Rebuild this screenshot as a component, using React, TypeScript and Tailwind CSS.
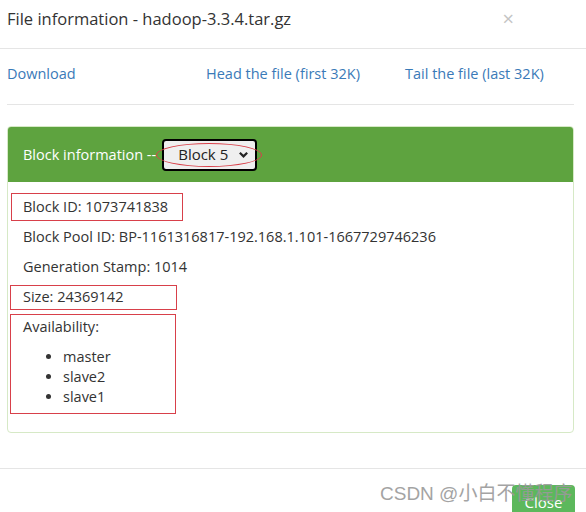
import React from "react";

const font = { fontFamily: '"Open Sans", "Noto Sans CJK SC", sans-serif' };

const App = () => {
  return (
    <div className="w-[586px] h-[512px] bg-white overflow-hidden relative text-[#333]" style={font}>
      {/* header */}
      <div className="h-[48px] flex items-center justify-between pl-[7px] pr-[72px] pb-[10px]">
        <h4 className="text-[16.5px] leading-none text-[#333]">File information - hadoop-3.3.4.tar.gz</h4>
        <span className="text-[20px] text-[#c4c4c4] leading-none">×</span>
      </div>
      <div className="border-t border-[#e5e5e5]" />

      <div className="px-[7px] pr-[12px]">
        <div className="h-[55px] flex items-center text-[14.5px] text-[#3a7ab8] pb-[6px]">
          <a className="w-[199px]">Download</a>
          <a className="w-[199px]">Head the file (first 32K)</a>
          <a>Tail the file (last 32K)</a>
        </div>
        <div className="border-t border-[#e5e5e5]" />

        {/* panel */}
        <div className="mt-[21px] h-[307px] border border-[#d6e9c6] rounded-[4px] overflow-hidden">
          <div className="h-[55px] bg-[#5ea33f] flex items-center pl-[15px] text-white text-[14.5px]">
            <span>Block information --</span>
            <div className="relative ml-[6px]">
              <div className="w-[95px] h-[32px] bg-[#efefef] border-2 border-black rounded-[4px] flex items-center justify-between pl-[14px] pr-[6px] text-[#222] text-[15px]">
                <span>Block 5</span>
                <svg width="11" height="11" viewBox="0 0 12 12">
                  <path d="M2 4 L6 8 L10 4" stroke="#222" strokeWidth="2.4" fill="none" />
                </svg>
              </div>
              <div className="absolute left-[-6px] top-[4px] w-[106px] h-[24px] rounded-[50%] border border-[#d8404a]" />
            </div>
          </div>
          <div className="pl-[15px] pt-[12px] text-[14.5px] text-[#333] relative">
            <p className="h-[30px] leading-[26px]">Block ID: 1073741838</p>
            <p className="h-[30px] leading-[26px]">Block Pool ID: BP-1161316817-192.168.1.101-1667729746236</p>
            <p className="h-[30px] leading-[26px]">Generation Stamp: 1014</p>
            <p className="h-[30px] leading-[26px]">Size: 24369142</p>
            <p className="h-[30px] leading-[26px]">Availability:</p>
            <ul className="list-disc pl-[40px] leading-[20px] pt-[3px]">
              <li>master</li>
              <li>slave2</li>
              <li>slave1</li>
            </ul>
            {/* annotation boxes */}
            <div className="absolute left-[3px] top-[11px] w-[172px] h-[28px] border border-[#d8404a]" />
            <div className="absolute left-[2px] top-[103px] w-[167px] h-[25px] border border-[#d8404a]" />
            <div className="absolute left-[2px] top-[132px] w-[166px] h-[100px] border border-[#d8404a]" />
          </div>
        </div>
      </div>

      {/* footer */}
      <div className="mt-[35px] border-t border-[#e5e5e5]" />
      <div className="absolute right-[11px] top-[485px] w-[63px] h-[34px] bg-[#5cb85c] rounded-[4px] text-white text-[15px] flex justify-center pt-[6px]">
        Close
      </div>
      <div className="absolute left-[380px] top-[480px] text-[19px] text-[#9a9a9a] opacity-90" style={{ fontFamily: '"Liberation Sans", "Noto Sans CJK SC", sans-serif' }}>
        CSDN @小白不懂程序
      </div>
    </div>
  );
};

export default App;
